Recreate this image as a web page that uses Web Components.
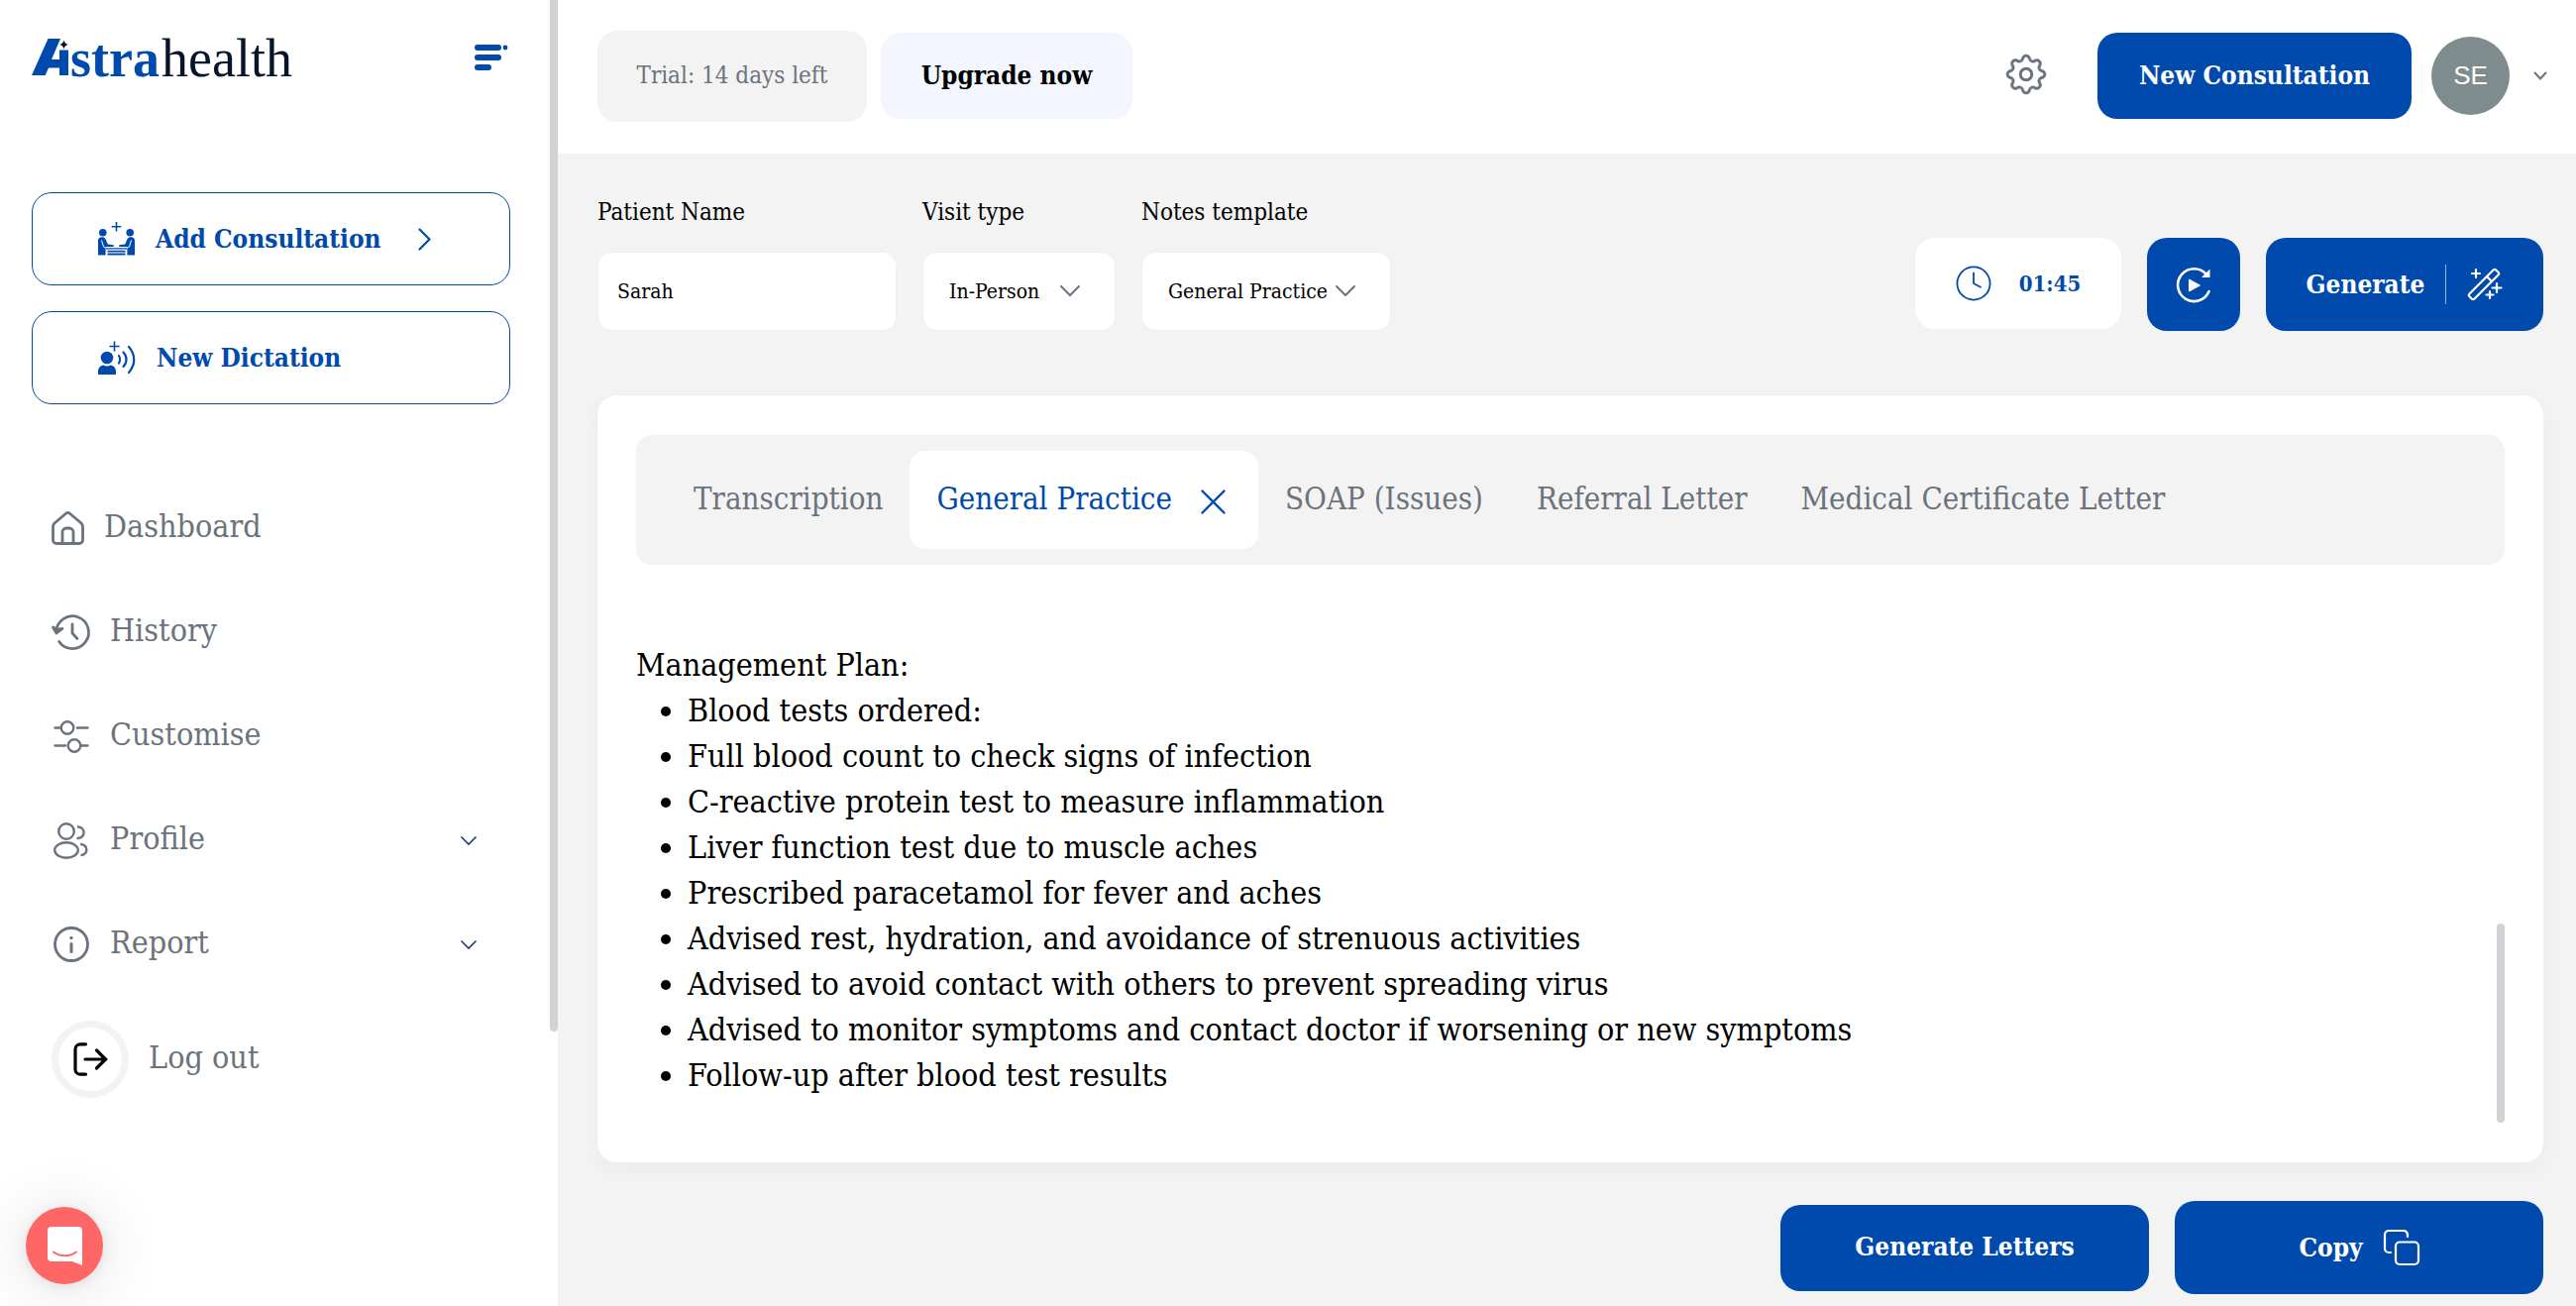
<!DOCTYPE html>
<html lang="en">
<head>
<meta charset="utf-8">
<title>Astra health</title>
<style>
    :root {
        --blue: #004aad;
        --grey: #6b737c;
        --surface: #f3f3f3;
        --thumb: #d0d2d6;
        --text-sm: 21px;
        --text-md: 24px;
        --text-btn: 26px;
        --text-tab: 31px;
        --text-lg: 32px;
        --radius: 20px;
    }

    body {
        margin: 0;
        background: var(--surface);
        color: #000;
        font-family: "DejaVu Serif Condensed", "DejaVu Serif", serif;
    }
</style>
</head>
<body>
<astra-app></astra-app>

<script>
// base
class BaseComponent extends HTMLElement {
    constructor() {
        super();
        this.attachShadow({ mode: 'open' });
    }

    connectedCallback() {
        const template = document.createElement('template');
        template.innerHTML = `${this.getCss()}${this.getHtml()}`;
        this.shadowRoot.replaceChildren(template.content.cloneNode(true));
    }
}

// one side of the consultation desk
const PERSON = `<circle cx="4.800" cy="10.700" r="3.800"/><path d="M0 33.500V19c0-2.500 1.500-3.700 4-3.700 2.300 0 3.300 1 4 3l1.800 4.300 5.900.6V25H7.600v8.500z"/><path d="M3.500 18.500l2 6.500 2.200 1.200" fill="none" stroke="#fff"/>`;

// icons: [width, height, markup]
const ICONS = {
    menu: [33, 26, `<g fill="currentColor"><rect width="27" height="6" rx="3"/><rect y="10" width="27" height="6" rx="3"/><rect y="20" width="17" height="6" rx="3"/><circle cx="31" cy="3" r="2.400"/></g>`],
    consultation: [37, 34, `<g fill="currentColor"><g>${PERSON}</g><g transform="translate(37) scale(-1 1)">${PERSON}</g>
        <path d="M8 26.200h21v1.300H8zM9.500 28.700h18v1.800h-18zM9.500 31.600h18v1.900h-18z"/></g>
        <path d="M18.500 0v9.500M13.700 4.700h9.600" stroke="currentColor" stroke-width="1.600"/>`],
    dictation: [38, 34, `<g fill="currentColor"><circle cx="9" cy="17" r="6.300"/><path d="M0 34v-3c0-4.500 3-6 5.500-6.500 2 1.200 5 1.200 7 0 2.500.5 5.500 2 5.500 6.500v3z"/></g>
        <g fill="none" stroke="currentColor" stroke-width="2.200" stroke-linecap="round"><path d="M16.500 1v9M12 5.500h9" stroke-width="1.600"/><path d="M21 15c1.300 2 1.300 5.500 0 7.500M25.500 11.500c4 4 4 10.500 0 14.500M31 6c7 8 7 18 0 26"/></g>`],
    next: [13, 23, `<path d="M1.500 1.500l10 10-10 10" fill="none" stroke="currentColor" stroke-width="2.200" stroke-linecap="round" stroke-linejoin="round"/>`],
    down: [16, 9, `<path d="M.5.500l7.500 7.500 7.500-7.500" fill="none" stroke="currentColor" stroke-width="1.600"/>`],
    caret: [14, 9, `<path d="M1 1l6 6.500L13 1" fill="none" stroke="currentColor" stroke-width="2"/>`],
    select: [20, 11, `<path d="M1 1l9 9 9-9" fill="none" stroke="currentColor" stroke-width="2" stroke-linecap="round" stroke-linejoin="round"/>`],
    home: [33, 34, `<g fill="none" stroke="currentColor" stroke-width="2.800" stroke-linejoin="round"><path d="M1.500 15.500V29a3.500 3.500 0 0 0 3.500 3.500h23a3.500 3.500 0 0 0 3.500-3.500V15.500c0-1.500-.5-2.500-1.500-3.500L18.500 2.300a3 3 0 0 0-4 0L3 12c-1 1-1.500 2-1.500 3.500z"/><path d="M11 32V21a4 4 0 0 1 4-4h3a4 4 0 0 1 4 4v11"/></g>`],
    history: [39, 37, `<g fill="none" stroke="currentColor" stroke-width="2.800" stroke-linecap="round" stroke-linejoin="round"><path d="M4.700 17.500A16.400 16.400 0 1 1 7.600 27.500"/><path d="M1.500 13l3.500 6 6-4.500-6 1z"/><path d="M21 10v9l5 5.500"/></g>`],
    customise: [36, 33, `<g fill="none" stroke="currentColor" stroke-width="2.400" stroke-linecap="round"><circle cx="14" cy="7.500" r="6.300"/><circle cx="21" cy="25.500" r="6.300"/><path d="M1.500 7.500h6M24 7.500h10.500M1.500 25.500H12M27.500 25.500h7"/></g>`],
    profile: [36, 37, `<g fill="none" stroke="currentColor" stroke-width="2.400" stroke-linecap="round"><circle cx="13" cy="9" r="7.800"/><ellipse cx="13" cy="28" rx="11.800" ry="7.800"/><path d="M25 4.500c7 .5 8 10.500-.5 11.500M28 22c7 1.500 7 9.500.5 11"/></g>`],
    info: [36, 36, `<circle cx="18" cy="18" r="16.500" fill="none" stroke="currentColor" stroke-width="2.800"/><circle cx="18" cy="11.500" r="1.700" fill="currentColor"/><path d="M18 17.500v8" stroke="currentColor" stroke-width="3" stroke-linecap="round"/>`],
    logout: [35, 34, `<g fill="none" stroke="currentColor" stroke-width="3.200" stroke-linecap="round" stroke-linejoin="round"><path d="M12.500 1.800H7a5 5 0 0 0-5 5v20.400a5 5 0 0 0 5 5h5.500"/><path d="M12 17h21M23.500 8l9 9-9 9"/></g>`],
    chat: [35, 39, `<path d="M4 0h27a4 4 0 0 1 4 4v35l-10-4H4a4 4 0 0 1-4-4V4a4 4 0 0 1 4-4z" fill="#fff"/><path d="M6 25.500c7 5 16 5 23 0" fill="none" stroke="currentColor" stroke-width="2" stroke-linecap="round"/>`],
    gear: [40, 40, `<g transform="scale(2.500)"><circle cx="8" cy="8" r="2.300" fill="none" stroke="currentColor" stroke-width="1.200"/><path fill="currentColor" stroke="currentColor" stroke-width=".2" d="M9.796 1.343c-.527-1.790-3.065-1.790-3.592 0l-.094.319a.873.873 0 0 1-1.255.52l-.292-.16c-1.640-.892-3.433.902-2.540 2.541l.159.292a.873.873 0 0 1-.52 1.255l-.319.094c-1.790.527-1.790 3.065 0 3.592l.319.094a.873.873 0 0 1 .52 1.255l-.16.292c-.892 1.640.901 3.434 2.541 2.540l.292-.159a.873.873 0 0 1 1.255.52l.094.319c.527 1.790 3.065 1.790 3.592 0l.094-.319a.873.873 0 0 1 1.255-.52l.292.16c1.640.893 3.434-.902 2.540-2.541l-.159-.292a.873.873 0 0 1 .52-1.255l.319-.094c1.790-.527 1.790-3.065 0-3.592l-.319-.094a.873.873 0 0 1-.52-1.255l.16-.292c.893-1.640-.902-3.433-2.541-2.540l-.292.159a.873.873 0 0 1-1.255-.52zm-2.633.283c.246-.835 1.428-.835 1.674 0l.094.319a1.873 1.873 0 0 0 2.693 1.115l.291-.16c.764-.415 1.600.42 1.184 1.185l-.159.292a1.873 1.873 0 0 0 1.116 2.692l.318.094c.835.246.835 1.428 0 1.674l-.319.094a1.873 1.873 0 0 0-1.115 2.693l.16.291c.415.764-.42 1.600-1.185 1.184l-.291-.159a1.873 1.873 0 0 0-2.693 1.116l-.094.318c-.246.835-1.428.835-1.674 0l-.094-.319a1.873 1.873 0 0 0-2.692-1.115l-.292.16c-.764.415-1.600-.42-1.184-1.185l.159-.291A1.873 1.873 0 0 0 1.945 8.930l-.319-.094c-.835-.246-.835-1.428 0-1.674l.319-.094A1.873 1.873 0 0 0 3.060 4.377l-.16-.292c-.415-.764.42-1.600 1.185-1.184l.292.159a1.873 1.873 0 0 0 2.692-1.115z"/></g>`],
    clock: [36, 36, `<g fill="none" stroke="currentColor" stroke-width="1.800" stroke-linecap="round" stroke-linejoin="round"><circle cx="18" cy="18" r="16.600"/><path d="M18 7.500V18l7 3.700"/></g>`],
    resume: [36, 37, `<path d="M33.600 25A16.400 16.400 0 1 1 31 8" fill="none" stroke="currentColor" stroke-width="2.600" stroke-linecap="round"/><path d="M34.500 2.500V11H26z" fill="currentColor"/><path d="M13.500 13l11 6-11 6z" fill="currentColor" stroke="currentColor" stroke-linejoin="round"/>`],
    wand: [36, 34, `<g fill="none" stroke="currentColor" stroke-width="2.200" stroke-linecap="round" stroke-linejoin="round"><path d="M26.500 2.500a2 2 0 0 1 2.800 0l2.200 2.200a2 2 0 0 1 0 2.800L7.500 31.500a2 2 0 0 1-2.800 0l-2.200-2.200a2 2 0 0 1 0-2.800zM20 9l5 5"/><path d="M9 2v8M5 6h8M30 16v9M25.500 20.500h9M23 24v7M19.500 27.500h7"/></g>`],
    copy: [36, 36, `<g fill="none" stroke="currentColor" stroke-width="2.200" stroke-linecap="round"><path d="M24 7V5a4 4 0 0 0-4-4H5a4 4 0 0 0-4 4v14a4 4 0 0 0 4 4h2"/><rect x="12" y="12.500" width="23" height="22.500" rx="4"/></g>`],
    close: [25, 25, `<path d="M1.500 1.500l22 22M23.500 1.500l-22 22" stroke="currentColor" stroke-width="2.400" stroke-linecap="round"/>`]
};

class AstraIcon extends BaseComponent {
    getHtml() {
        const [w, h, markup] = ICONS[this.getAttribute('name')];
        return `<svg width="${w}" height="${h}" viewBox="0 0 ${w} ${h}" aria-hidden="true">${markup}</svg>`;
    }

    getCss = () => `<style>
        :host {
            display: inline-flex;
            flex: none;
        }

        svg {
            display: block;
            overflow: visible;
        }
    </style>`;
}

// buttons
class AstraButton extends BaseComponent {
    getHtml() {
        const label = this.getAttribute('label');
        return `<button type="button"${label ? ` aria-label="${label}"` : ''}><slot></slot></button>`;
    }

    getCss = () => `<style>
        :host {
            display: block;
        }

        button {
            box-sizing: border-box;
            width: 100%;
            min-height: 87px;
            padding: 0 24px 2px;
            display: flex;
            align-items: center;
            justify-content: center;
            gap: 21px;
            border: 0;
            border-radius: var(--radius);
            background: var(--blue);
            color: #fff;
            font: bold var(--text-btn)/32px "DejaVu Serif Condensed", "DejaVu Serif", serif;
            white-space: nowrap;
            cursor: pointer;
        }

        :host([tall]) button {
            min-height: 94px;
            padding-bottom: 0;
        }

        :host([kind='soft']) button {
            background: #f4f6ff;
            color: #000;
        }

        :host([kind='outline']) button {
            justify-content: flex-start;
            padding: 0 66px;
            border: 1px solid var(--blue);
            background: #fff;
            color: var(--blue);
        }
    </style>`;
}

// sidebar
class AstraLogo extends BaseComponent {
    getHtml() {
        return `<svg width="38" height="37" viewBox="0 0 38 37" aria-hidden="true">
            <path fill="#004aad" d="M0 37L16.500 0H29l-9 21h8v-9.500h9V37h-9v-7.500H17L13.700 37z"/>
            <path fill="#06152b" d="M32.500 1.500q.8 3.700 4.500 4.500-3.700.8-4.500 4.500-.8-3.700-4.500-4.500 3.700-.8 4.500-4.500z"/>
        </svg><span><b>stra</b>health</span>`;
    }

    getCss = () => `<style>
        :host {
            display: flex;
            align-items: flex-start;
            gap: 1px;
            height: 37px;
            color: #06152b;
            font: 54px/50px "Liberation Serif", serif;
        }

        span {
            margin-top: -5px;
        }

        b {
            margin-right: 2px;
            color: var(--blue);
        }
    </style>`;
}

class NavItem extends BaseComponent {
    getHtml() {
        const content = `<astra-icon class="icon" name="${this.getAttribute('icon')}"></astra-icon><span><slot></slot></span>`;
        if (this.hasAttribute('expandable')) {
            return `<button type="button" aria-expanded="false">${content}<astra-icon class="chevron" name="down"></astra-icon></button>`;
        }
        return `<a href="#">${content}</a>`;
    }

    getCss = () => `<style>
        :host {
            display: block;
        }

        a, button {
            box-sizing: border-box;
            width: 100%;
            min-height: 48px;
            padding: 0;
            display: flex;
            align-items: center;
            gap: 20px;
            border: 0;
            background: none;
            color: var(--grey);
            font: var(--text-lg)/40px "DejaVu Serif Condensed", "DejaVu Serif", serif;
            text-decoration: none;
            cursor: pointer;
        }

        span {
            padding-bottom: 4px;
        }

        .icon {
            min-width: 39px;
            justify-content: center;
        }

        :host([icon='home']) .icon {
            min-width: 33px;
        }

        .chevron {
            margin-left: auto;
            color: #1d3f6e;
        }

        :host([round]) {
            margin-top: -4px;
        }

        :host([round]) .icon {
            box-sizing: border-box;
            width: 78px;
            height: 78px;
            align-items: center;
            border: 7px solid var(--surface);
            border-radius: 50%;
            color: #000;
        }
    </style>`;
}

class AstraSidebar extends BaseComponent {
    getHtml() {
        return `<div class="top">
            <astra-logo></astra-logo>
            <button type="button" class="menu" aria-label="Collapse menu"><astra-icon name="menu"></astra-icon></button>
        </div>
        <div class="actions">
            <astra-button kind="outline" tall><astra-icon name="consultation"></astra-icon>Add Consultation<astra-icon class="next" name="next"></astra-icon></astra-button>
            <astra-button kind="outline" tall><astra-icon name="dictation"></astra-icon>New Dictation</astra-button>
        </div>
        <nav>
            <nav-item icon="home">Dashboard</nav-item>
            <nav-item icon="history">History</nav-item>
            <nav-item icon="customise">Customise</nav-item>
            <nav-item icon="profile" expandable>Profile</nav-item>
            <nav-item icon="info" expandable>Report</nav-item>
            <nav-item icon="logout" round>Log out</nav-item>
        </nav>
        <div class="thumb"></div>
        <button type="button" class="chat" aria-label="Open chat"><astra-icon name="chat"></astra-icon></button>`;
    }

    getCss = () => `<style>
        :host {
            box-sizing: border-box;
            position: relative;
            display: block;
            padding: 39px 48px 0 32px;
            background: #fff;
        }

        .top {
            display: flex;
            justify-content: space-between;
        }

        .menu, .chat {
            padding: 0;
            display: flex;
            align-items: center;
            border: 0;
            background: none;
            color: var(--blue);
            cursor: pointer;
        }

        .menu {
            margin-right: 3px;
        }

        .actions {
            display: grid;
            gap: 26px;
            margin-top: 118px;
        }

        .next {
            margin-left: 16px;
        }

        nav {
            display: grid;
            gap: 57px;
            margin-top: 101px;
            padding: 0 34px 0 20px;
        }

        .thumb {
            position: absolute;
            top: 0;
            right: 0;
            width: 8px;
            height: 79%;
            border-radius: 0 0 4px 4px;
            background: var(--thumb);
        }

        .chat {
            position: absolute;
            left: 26px;
            bottom: 22px;
            width: 78px;
            height: 78px;
            justify-content: center;
            border-radius: 50%;
            background: #ff6766;
            color: #ff6766;
            box-shadow: 0 2px 12px rgba(0, 0, 0, .08), 0 4px 64px rgba(0, 0, 0, .14);
        }
    </style>`;
}

// header
class AstraHeader extends BaseComponent {
    getHtml() {
        return `<span class="trial">Trial: 14 days left</span>
        <astra-button class="upgrade" kind="soft">Upgrade now</astra-button>
        <button type="button" class="gear" aria-label="Settings"><astra-icon name="gear"></astra-icon></button>
        <astra-button class="consult">New Consultation</astra-button>
        <button type="button" class="user"><span>SE</span><astra-icon name="caret"></astra-icon></button>`;
    }

    getCss = () => `<style>
        :host {
            box-sizing: border-box;
            min-height: 155px;
            padding: 0 29px 2px 40px;
            display: flex;
            align-items: center;
            background: #fff;
        }

        .trial {
            box-sizing: border-box;
            min-width: 272px;
            padding: 29px 24px 31px;
            border-radius: var(--radius);
            background: var(--surface);
            color: var(--grey);
            font-size: var(--text-md);
            line-height: 32px;
            text-align: center;
            white-space: nowrap;
        }

        .upgrade {
            min-width: 254px;
            margin-left: 14px;
        }

        .gear, .user {
            padding: 0;
            border: 0;
            background: none;
            color: var(--grey);
            cursor: pointer;
        }

        .gear {
            margin: 0 52px 0 auto;
        }

        .consult {
            min-width: 317px;
            margin-right: 20px;
        }

        .user {
            display: flex;
            align-items: center;
            gap: 24px;
            font: 26px "Liberation Sans", sans-serif;
        }

        .user span {
            width: 79px;
            line-height: 79px;
            border-radius: 50%;
            background: #7f8c8d;
            color: #fff;
        }
    </style>`;
}

// fields
class FormField extends BaseComponent {
    getHtml() {
        const value = this.getAttribute('value');
        const control = this.hasAttribute('select')
            ? `<select id="control"><option>${value}</option></select><astra-icon name="select"></astra-icon>`
            : `<input id="control" type="text" value="${value}">`;
        return `<label for="control"><slot></slot></label><div>${control}</div>`;
    }

    getCss = () => `<style>
        :host {
            display: grid;
            gap: 24px;
        }

        label {
            font-size: var(--text-md);
            line-height: 32px;
        }

        div {
            position: relative;
        }

        input, select {
            box-sizing: border-box;
            width: 100%;
            height: 80px;
            padding: 0 19px;
            border: 1px solid #efefef;
            border-radius: 14px;
            background: #fff;
            color: #000;
            font: var(--text-sm) "DejaVu Serif Condensed", "DejaVu Serif", serif;
            appearance: none;
        }

        select {
            padding: 0 26px;
        }

        astra-icon {
            position: absolute;
            top: 34px;
            right: 36px;
            color: var(--grey);
            pointer-events: none;
        }
    </style>`;
}

class AstraToolbar extends BaseComponent {
    getHtml() {
        return `<form-field class="patient" value="Sarah">Patient Name</form-field>
        <form-field class="visit" value="In-Person" select>Visit type</form-field>
        <form-field class="notes" value="General Practice" select>Notes template</form-field>
        <div class="controls">
            <div class="timer"><astra-icon name="clock"></astra-icon><time>01:45</time></div>
            <astra-button class="resume" label="Resume recording" tall><astra-icon name="resume"></astra-icon></astra-button>
            <astra-button class="generate" tall>Generate<i></i><astra-icon name="wand"></astra-icon></astra-button>
        </div>`;
    }

    getCss = () => `<style>
        :host {
            display: flex;
            align-items: flex-end;
            gap: 26px;
        }

        .patient {
            width: 302px;
        }

        .visit {
            width: 195px;
        }

        .notes {
            width: 252px;
        }

        .controls {
            display: flex;
            gap: 26px;
            margin-left: auto;
        }

        .timer {
            box-sizing: border-box;
            min-width: 208px;
            height: 92px;
            display: flex;
            align-items: center;
            justify-content: center;
            gap: 28px;
            border-radius: var(--radius);
            background: #fff;
            color: var(--blue);
            font-size: 22px;
            font-weight: bold;
        }

        .resume {
            width: 94px;
        }

        .generate {
            width: 280px;
        }

        i {
            width: 1px;
            height: 40px;
            background: rgba(255, 255, 255, .6);
        }
    </style>`;
}

// notes
class NotesTabs extends BaseComponent {
    getHtml() {
        return `<button type="button" role="tab">Transcription</button>
        <div class="active">
            <button type="button" role="tab" aria-selected="true">General Practice</button>
            <button type="button" class="close" aria-label="Close tab"><astra-icon name="close"></astra-icon></button>
        </div>
        <button type="button" role="tab">SOAP (Issues)</button>
        <button type="button" role="tab">Referral Letter</button>
        <button type="button" role="tab">Medical Certificate Letter</button>`;
    }

    getCss = () => `<style>
        :host {
            display: flex;
            align-items: center;
            padding: 16px 31px;
            border-radius: 16px;
            background: var(--surface);
        }

        button {
            padding: 0 27px 4px;
            border: 0;
            background: none;
            color: var(--grey);
            font: var(--text-tab)/40px "DejaVu Serif Condensed", "DejaVu Serif", serif;
            white-space: nowrap;
            cursor: pointer;
        }

        .active {
            min-height: 99px;
            display: flex;
            align-items: center;
            border-radius: 16px;
            background: #fff;
        }

        .active button {
            color: var(--blue);
        }

        .active .close {
            display: flex;
            padding: 4px 33px 0 2px;
        }
    </style>`;
}

class NotesCard extends BaseComponent {
    getHtml() {
        return `<notes-tabs role="tablist"></notes-tabs>
        <div class="notes"><slot></slot></div>
        <div class="thumb"></div>`;
    }

    getCss = () => `<style>
        :host {
            position: relative;
            display: block;
            padding: 40px 39px;
            border-radius: var(--radius);
            background: #fff;
            box-shadow: 0 8px 24px rgba(0, 40, 40, .04);
        }

        .notes {
            margin-top: 78px;
            font-size: var(--text-lg);
            line-height: 46px;
        }

        .thumb {
            position: absolute;
            right: 39px;
            bottom: 40px;
            width: 8px;
            height: 201px;
            border-radius: 4px;
            background: var(--thumb);
        }

        ::slotted(p) {
            margin: 0;
        }

        ::slotted(ul) {
            margin: 0;
            padding-left: 52px;
        }
    </style>`;
}

class AstraApp extends BaseComponent {
    getHtml() {
        return `<astra-sidebar></astra-sidebar>
        <main>
            <astra-header></astra-header>
            <section>
                <astra-toolbar></astra-toolbar>
                <notes-card>
                    <p>Management Plan:</p>
                    <ul>
                        <li>Blood tests ordered:</li>
                        <li>Full blood count to check signs of infection</li>
                        <li>C-reactive protein test to measure inflammation</li>
                        <li>Liver function test due to muscle aches</li>
                        <li>Prescribed paracetamol for fever and aches</li>
                        <li>Advised rest, hydration, and avoidance of strenuous activities</li>
                        <li>Advised to avoid contact with others to prevent spreading virus</li>
                        <li>Advised to monitor symptoms and contact doctor if worsening or new symptoms</li>
                        <li>Follow-up after blood test results</li>
                    </ul>
                </notes-card>
                <footer>
                    <astra-button>Generate Letters</astra-button>
                    <astra-button tall>Copy<astra-icon name="copy"></astra-icon></astra-button>
                </footer>
            </section>
        </main>`;
    }

    getCss = () => `<style>
        :host {
            display: flex;
            min-height: 100vh;
        }

        astra-sidebar {
            flex: none;
            width: 563px;
        }

        main {
            flex: 1;
            min-width: 0;
            display: flex;
            flex-direction: column;
        }

        section {
            flex: 1;
            display: flex;
            flex-direction: column;
            padding: 43px 33px 12px 40px;
        }

        notes-card {
            flex: 1;
            margin: 65px 0 39px;
        }

        footer {
            display: flex;
            align-items: center;
            justify-content: flex-end;
            gap: 26px;
        }

        footer astra-button {
            width: 372px;
        }
    </style>`;
}

customElements.define('astra-icon', AstraIcon);
customElements.define('astra-button', AstraButton);
customElements.define('astra-logo', AstraLogo);
customElements.define('nav-item', NavItem);
customElements.define('astra-sidebar', AstraSidebar);
customElements.define('astra-header', AstraHeader);
customElements.define('form-field', FormField);
customElements.define('astra-toolbar', AstraToolbar);
customElements.define('notes-tabs', NotesTabs);
customElements.define('notes-card', NotesCard);
customElements.define('astra-app', AstraApp);
</script>
</body>
</html>
